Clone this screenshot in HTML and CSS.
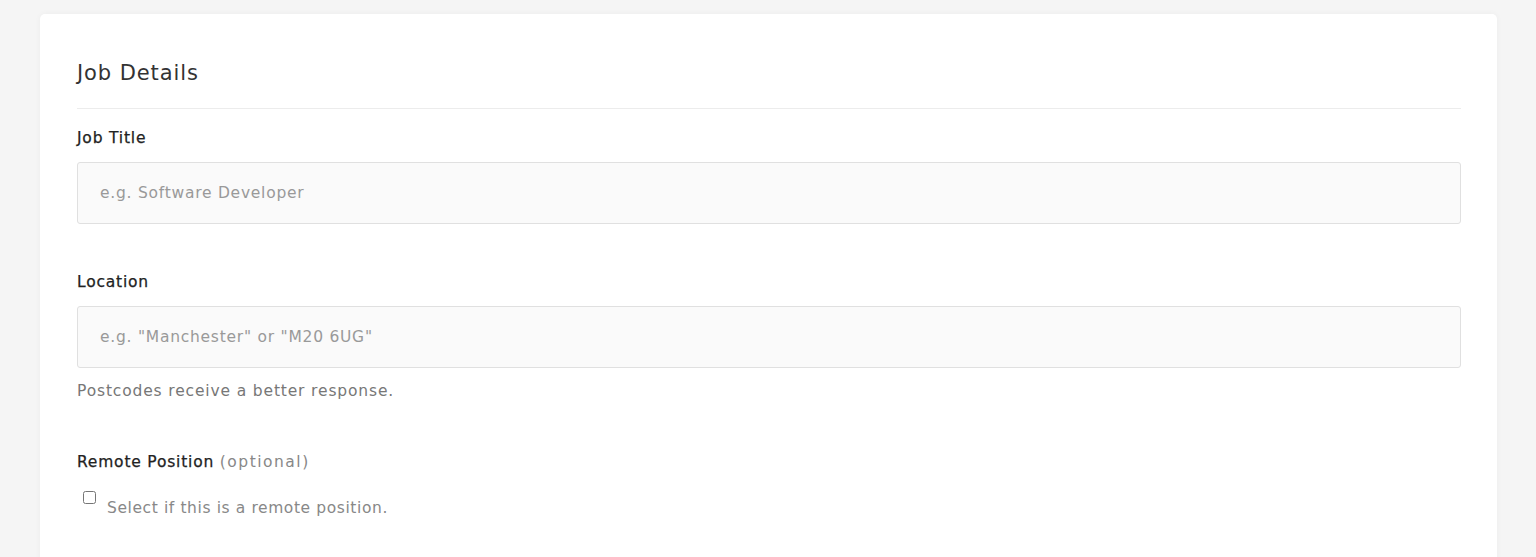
FILE: index.html
```html
<!DOCTYPE html>
<html lang="en">
<head>
<meta charset="utf-8">
<title>Job Details</title>
<link rel="stylesheet" href="styles.css">
</head>
<body>
  <main class="card">
    <header class="card-header">
      <h2 class="card-title">Job Details</h2>
    </header>
    <div class="field field-first">
      <label class="label" for="title">Job Title</label>
      <input class="input" id="title" type="text" placeholder="e.g. Software Developer">
    </div>
    <div class="field">
      <label class="label" for="loc">Location</label>
      <input class="input" id="loc" type="text" placeholder="e.g. &quot;Manchester&quot; or &quot;M20 6UG&quot;">
      <p class="help">Postcodes receive a better response.</p>
    </div>
    <div class="field field-remote">
      <span class="label">Remote Position <span class="optional">(optional)</span></span>
      <label class="check-row">
        <input class="checkbox" type="checkbox">
        <span class="check-text">Select if this is a remote position.</span>
      </label>
    </div>
  </main>
</body>
</html>
```
FILE: styles.css
```css
* { box-sizing: border-box; }
html, body { height: 100%; }
body {
  margin: 0;
  background: #f5f5f5;
  font-family: "DejaVu Sans", "Open Sans", sans-serif;
  color: #333;
  overflow: hidden;
}
.card {
  margin: 14px 39px 0 40px;
  background: #fff;
  border-radius: 5px;
  box-shadow: 0 0 6px rgba(0,0,0,0.04);
  padding: 41px 36px 60px 37px;
  min-height: 600px;
}
.card-header {
  padding-bottom: 17px;
  border-bottom: 1px solid #ececec;
}
.card-title {
  margin: 0;
  font-size: 21px;
  line-height: 36px;
  font-weight: 400;
  color: #333;
  letter-spacing: 0.9px;
}
.field { display: flex; flex-direction: column; }
.field-first { margin-top: 18px; }
.field + .field { margin-top: 47px; }
.field-remote { margin-top: 49px !important; }
.label {
  font-size: 15.5px;
  line-height: 22px;
  font-weight: 400;
  color: #222;
  letter-spacing: 0.8px;
  -webkit-text-stroke: 0.25px #222;
}
.optional {
  font-weight: 400;
  color: #888;
  -webkit-text-stroke: 0;
  letter-spacing: 1.5px;
}
.input {
  margin-top: 13px;
  height: 62px;
  border: 1px solid #e0e0e0;
  border-radius: 3px;
  background: #fafafa;
  padding: 0 22px;
  font-family: inherit;
  font-size: 15.5px;
  letter-spacing: 0.75px;
  color: #333;
  outline: none;
}
.input::placeholder { color: #999; opacity: 1; }
.help {
  margin: 12px 0 0;
  font-size: 15.5px;
  line-height: 22px;
  color: #777;
  letter-spacing: 0.85px;
}
.check-row {
  display: flex;
  align-items: flex-start;
  margin-top: 18px;
  padding-left: 6px;
}
.checkbox {
  margin: 0;
  width: 13px;
  height: 13px;
}
.check-text {
  margin-left: 11px;
  margin-top: 6px;
  font-size: 15.5px;
  line-height: 22px;
  color: #888;
  letter-spacing: 0.6px;
}
```
